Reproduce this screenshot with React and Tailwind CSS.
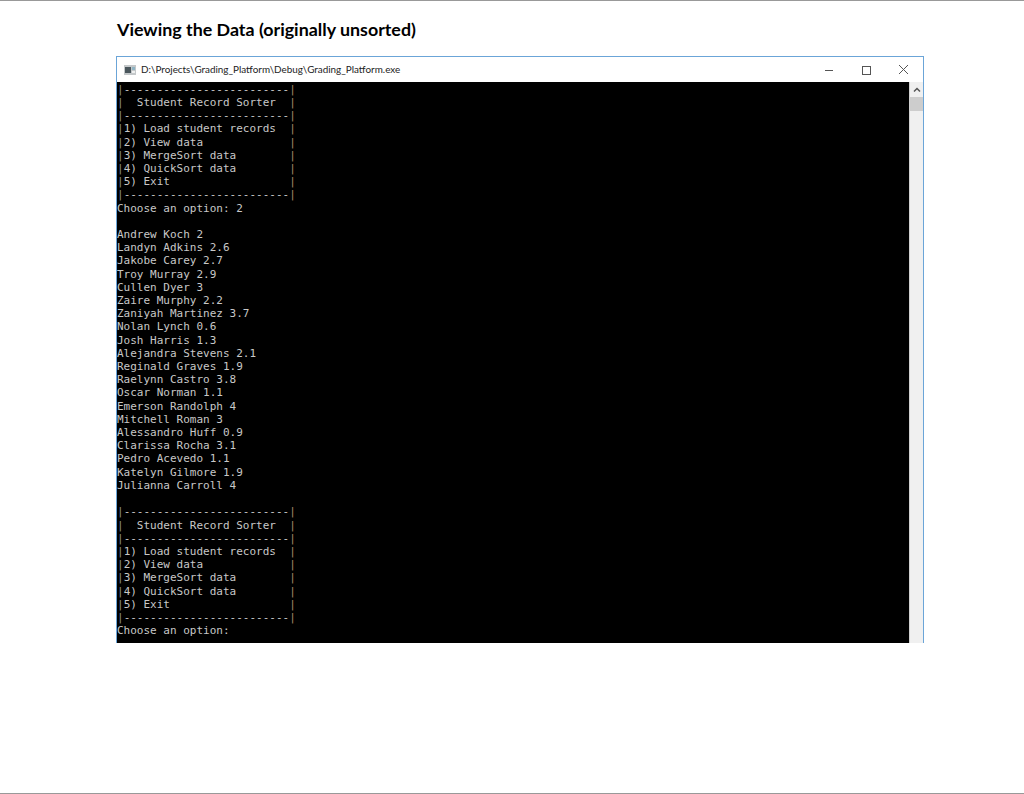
const menu = [
  '|-------------------------|',
  '|  Student Record Sorter  |',
  '|-------------------------|',
  '|1) Load student records  |',
  '|2) View data             |',
  '|3) MergeSort data        |',
  '|4) QuickSort data        |',
  '|5) Exit                  |',
  '|-------------------------|',
];

const records = [
  'Andrew Koch 2',
  'Landyn Adkins 2.6',
  'Jakobe Carey 2.7',
  'Troy Murray 2.9',
  'Cullen Dyer 3',
  'Zaire Murphy 2.2',
  'Zaniyah Martinez 3.7',
  'Nolan Lynch 0.6',
  'Josh Harris 1.3',
  'Alejandra Stevens 2.1',
  'Reginald Graves 1.9',
  'Raelynn Castro 3.8',
  'Oscar Norman 1.1',
  'Emerson Randolph 4',
  'Mitchell Roman 3',
  'Alessandro Huff 0.9',
  'Clarissa Rocha 3.1',
  'Pedro Acevedo 1.1',
  'Katelyn Gilmore 1.9',
  'Julianna Carroll 4',
];

const lines = [...menu, 'Choose an option: 2', '', ...records, '', ...menu, 'Choose an option:'];

// the box edges come out dimmer and warmer than the text in the original
const ConsoleLine = ({ text }) => {
  if (!text.startsWith('|')) return <div className="h-[13.21px]">{text}</div>;
  return (
    <div className="h-[13.21px]">
      <span className="text-[#8a8f94]">|</span>
      {text.slice(1, -1)}
      <span className="text-[#a88a68]">|</span>
    </div>
  );
};

const App = () => {
  return (
    <div className="h-[794px] w-[1024px] bg-white border-t border-b border-[#999999] flex flex-col pl-[116px] overflow-hidden">
      <h2 className="mt-[17px] mb-px pl-px h-[22px] text-[17.85px] leading-[22px] font-bold text-black font-['Lato',sans-serif]">
        Viewing the Data (originally unsorted)
      </h2>

      {/* Console window */}
      <div className="mt-[15px] w-[808px] h-[587px] border-t border-x border-[#6ba5d8] bg-white flex flex-col">
        <div className="h-[25px] flex items-center shrink-0">
          <svg className="ml-[7px]" width="12" height="10" viewBox="0 0 12 10">
            <rect x="0" y="0" width="12" height="10" fill="#c4c8ca" />
            <rect x="1" y="2" width="6" height="6" fill="#4a565c" />
            <rect x="8" y="2" width="3" height="3" fill="#8fb4c4" />
            <rect x="8" y="6" width="3" height="2" fill="#eef0f0" />
          </svg>
          <span className="ml-[5px] -mt-[2px] text-[9.9px] leading-[12px] text-[#222222] font-['Lato',sans-serif]">
            D:\Projects\Grading_Platform\Debug\Grading_Platform.exe
          </span>
          <div className="ml-auto flex items-center">
            <svg width="10" height="10" viewBox="0 0 10 10">
              <path d="M1 5.5H9" stroke="#555555" />
            </svg>
            <svg className="ml-[27px]" width="10" height="10" viewBox="0 0 10 10">
              <rect x="1.5" y="1.5" width="8" height="8" fill="none" stroke="#555555" />
            </svg>
            <svg className="ml-[27px] mr-[14px]" width="11" height="11" viewBox="0 0 11 11">
              <path d="M1 1L10 10M10 1L1 10" stroke="#555555" />
            </svg>
          </div>
        </div>

        <div className="flex flex-1 min-h-0">
          <pre className="flex-1 bg-black overflow-hidden text-[#c8c8c8] text-[11px] leading-[13.21px] font-['DejaVu_Sans_Mono',monospace] pt-[0.8px]">
            {lines.map((line, i) => (
              <ConsoleLine key={i} text={line} />
            ))}
          </pre>
          <div className="w-[14px] shrink-0 bg-[#f0f0f0] border-l border-[#d0d0d0] flex flex-col">
            <div className="h-[15px] flex items-center justify-center">
              <svg width="8" height="6" viewBox="0 0 8 6">
                <path d="M1 4.5L4 1.5L7 4.5" fill="none" stroke="#555555" strokeWidth="1.5" />
              </svg>
            </div>
            <div className="h-[14px] bg-[#cdcdcd]" />
          </div>
        </div>
      </div>
    </div>
  );
};

export default App;
